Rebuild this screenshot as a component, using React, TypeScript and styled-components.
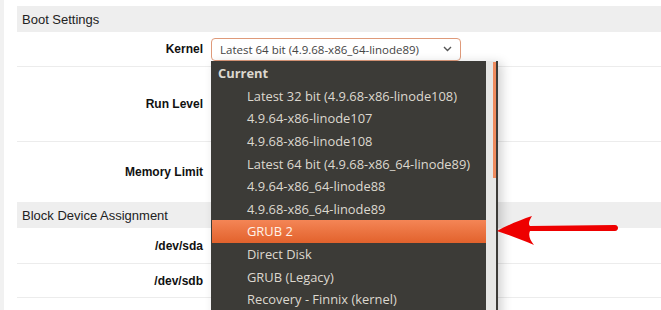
import styled, { createGlobalStyle } from "styled-components";

const GlobalStyle = createGlobalStyle`
  html, body {
    margin: 0;
    padding: 0;
    background: #ffffff;
    overflow: hidden;
  }
`;

const Page = styled.div`
  position: relative;
  display: flex;
  width: 661px;
  height: 310px;
  overflow: hidden;
  background: #ffffff;
  font-family: "Liberation Sans", Arial, sans-serif;
`;

const LeftEdge = styled.div`
  width: 4px;
  flex-shrink: 0;
  background: #f1f1f1;
`;

const Content = styled.div`
  flex: 1;
  margin-left: 13px;
  padding-top: 6px;
  display: flex;
  flex-direction: column;
`;

const SectionHeader = styled.div`
  height: 26px;
  flex-shrink: 0;
  display: flex;
  align-items: center;
  padding-left: 5px;
  background: #eeeeee;
  color: #222;
  font-size: 13px;
`;

const Row = styled.div<{ $h: number; $last?: boolean }>`
  height: ${(p) => p.$h}px;
  display: flex;
  align-items: center;
  border-bottom: ${(p) => (p.$last ? "none" : "1px solid #ececec")};
  flex-shrink: 0;
`;

const Label = styled.div`
  width: 186px;
  text-align: right;
  font-weight: bold;
  font-size: 12px;
  color: #111;
`;

const Control = styled.div`
  margin-left: 8px;
  display: flex;
  align-items: center;
`;

const Select = styled.div`
  width: 250px;
  height: 23px;
  box-sizing: border-box;
  border: 1px solid #df9a7a;
  border-radius: 4px;
  display: flex;
  align-items: center;
  justify-content: space-between;
  padding: 0 8px 0 8px;
  font-family: "Open Sans", "Noto Sans", sans-serif;
  font-size: 11.5px;
  color: #444;
  background: #fff;
`;

const Menu = styled.div`
  position: absolute;
  left: 211px;
  top: 61px;
  width: 285px;
  height: 260px;
  display: flex;
  background: #3c3b37;
  box-shadow: 4px 2px 10px rgba(0, 0, 0, 0.18);
  border-right: 2px solid #3c3b37;
`;

const MenuList = styled.div`
  flex: 1;
  padding-top: 1px;
  display: flex;
  flex-direction: column;
`;

const MenuItem = styled.div<{ $group?: boolean; $active?: boolean }>`
  height: 22.6px;
  flex-shrink: 0;
  display: flex;
  align-items: center;
  padding-left: ${(p) => (p.$group ? 6 : 35)}px;
  margin-left: 1px;
  font-family: "Open Sans", "Noto Sans", sans-serif;
  font-size: 12.9px;
  font-weight: ${(p) => (p.$group ? 700 : 400)};
  color: ${(p) => (p.$active ? "#fff3ea" : "#dcd8cf")};
  background: ${(p) =>
    p.$active ? "linear-gradient(#f48556, #e2622c)" : "transparent"};
  white-space: nowrap;
`;

const Scrollbar = styled.div`
  width: 10px;
  background: #e6e6e4;
  display: flex;
  justify-content: flex-end;
`;

const Thumb = styled.div`
  width: 3px;
  height: 116px;
  margin-top: 1px;
  background: #ee8b5e;
`;

const Arrow = styled.svg`
  position: absolute;
  left: 494px;
  top: 212px;
`;

const kernels = [
  "Latest 32 bit (4.9.68-x86-linode108)",
  "4.9.64-x86-linode107",
  "4.9.68-x86-linode108",
  "Latest 64 bit (4.9.68-x86_64-linode89)",
  "4.9.64-x86_64-linode88",
  "4.9.68-x86_64-linode89",
  "GRUB 2",
  "Direct Disk",
  "GRUB (Legacy)",
  "Recovery - Finnix (kernel)",
];

export default function App() {
  return (
    <Page>
      <GlobalStyle />
      <LeftEdge />
      <Content>
        <SectionHeader>Boot Settings</SectionHeader>
        <Row $h={34}>
          <Label>Kernel</Label>
          <Control>
            <Select>
              <span>Latest 64 bit (4.9.68-x86_64-linode89)</span>
              <svg width="9" height="6" viewBox="0 0 9 6">
                <path d="M1 1 L4.5 4.5 L8 1" fill="none" stroke="#555" strokeWidth="1.4" />
              </svg>
            </Select>
          </Control>
        </Row>
        <Row $h={74}>
          <Label>Run Level</Label>
        </Row>
        <Row $h={60} $last>
          <Label>Memory Limit</Label>
        </Row>
        <SectionHeader>Block Device Assignment</SectionHeader>
        <Row $h={35}>
          <Label>/dev/sda</Label>
        </Row>
        <Row $h={33}>
          <Label>/dev/sdb</Label>
        </Row>
        <Row $h={34} $last>
          <Label>/dev/sdc</Label>
        </Row>
      </Content>

      <Menu>
        <MenuList>
          <MenuItem $group>Current</MenuItem>
          {kernels.map((k) => (
            <MenuItem key={k} $active={k === "GRUB 2"}>
              {k}
            </MenuItem>
          ))}
        </MenuList>
        <Scrollbar>
          <Thumb />
        </Scrollbar>
      </Menu>

      <Arrow width="130" height="36" viewBox="0 0 130 36">
        <path
          d="M3 19 C14 13, 26 8, 38 4 C35 9, 34 12, 36 14 L121 13 C125 13, 125 19, 121 19 L36 19 C34 23, 36 28, 40 33 C28 28, 15 23, 3 19 Z"
          fill="#ee0000"
        />
      </Arrow>
    </Page>
  );
}
